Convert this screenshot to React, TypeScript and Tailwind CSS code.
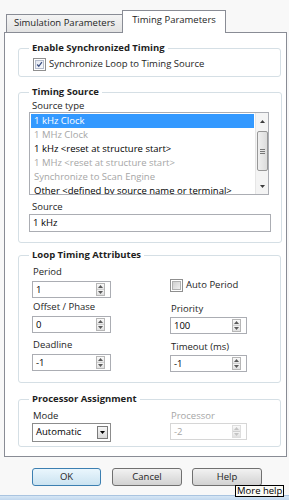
import React from 'react';

const font = { fontFamily: '"Open Sans", "Noto Sans", sans-serif' };

type Item = { text: string; selected?: boolean; disabled?: boolean };

const sourceTypes: Item[] = [
  { text: '1 kHz Clock', selected: true },
  { text: '1 MHz Clock', disabled: true },
  { text: '1 kHz <reset at structure start>' },
  { text: '1 MHz <reset at structure start>', disabled: true },
  { text: 'Synchronize to Scan Engine', disabled: true },
  { text: 'Other <defined by source name or terminal>' },
];

function Arrow({ down, color = '#4d4d4d' }: { down?: boolean; color?: string }) {
  return (
    <svg width="5" height="3" viewBox="0 0 5 3">
      <path d={down ? 'M0 0h5L2.5 3z' : 'M0 3h5L2.5 0z'} fill={color} />
    </svg>
  );
}

function Spin({
  value,
  width,
  disabled,
}: {
  value: string;
  width: string;
  disabled?: boolean;
}) {
  return (
    <div
      className={`flex h-[17px] items-center bg-white pl-[3px] pr-[5px] ${width} border ${
        disabled ? 'border-[#d6d6d6] text-[#a6a6a6]' : 'border-[#abadb3] text-black'
      }`}
    >
      <span className="flex-1 leading-none">{value}</span>
      <div
        className={`flex h-[13px] w-[9px] flex-col border ${
          disabled ? 'border-[#dedede]' : 'border-[#b6b6b6]'
        }`}
      >
        <div className="flex flex-1 items-center justify-center border-b border-[#d0d0d0] bg-linear-to-b from-[#fafafa] to-[#e6e6e6]">
          <Arrow color={disabled ? '#c4c4c4' : '#5a5a5a'} />
        </div>
        <div className="flex flex-1 items-center justify-center bg-linear-to-b from-[#f4f4f4] to-[#e0e0e0]">
          <Arrow down color={disabled ? '#c4c4c4' : '#5a5a5a'} />
        </div>
      </div>
    </div>
  );
}

function Check({ checked }: { checked?: boolean }) {
  return (
    <div className="flex h-[13px] w-[13px] items-center justify-center border border-[#8f8f8f] bg-white">
      <div
        className={`flex h-[9px] w-[9px] items-center justify-center border ${
          checked
            ? 'border-[#b5bccc] bg-linear-to-br from-[#e4e8f1] to-[#f8f9fb]'
            : 'border-[#b0b0b0] bg-linear-to-br from-[#cfcfcf] to-[#f0f0f0]'
        }`}
      >
        {checked && (
          <svg width="9" height="9" viewBox="0 0 9 9">
            <path d="M1.5 4.5 3.6 6.8 7.6 1.6" stroke="#3b4f81" strokeWidth="1.6" fill="none" />
          </svg>
        )}
      </div>
    </div>
  );
}

function Group({
  title,
  className,
  children,
}: {
  title: string;
  className: string;
  children: React.ReactNode;
}) {
  return (
    <fieldset
      className={`ml-[13px] w-[263px] rounded-[3px] border border-[#d5dfe5] px-[10px] ${className}`}
    >
      <legend className="px-[3px] text-[9.5px] font-bold leading-[14px] text-[#1e1e1e]">
        {title}
      </legend>
      {children}
    </fieldset>
  );
}

function Button({ label, primary }: { label: string; primary?: boolean }) {
  return (
    <div
      className={`flex h-[18px] items-center justify-center rounded-[3px] border ${
        primary
          ? 'w-[69px] border-[#3c7fb1] bg-linear-to-b from-[#eaf6fd] to-[#cbe3f1]'
          : 'w-[70px] border-[#707070] bg-linear-to-b from-[#f2f2f2] to-[#d2d2d2]'
      }`}
    >
      {label}
    </div>
  );
}

export default function App() {
  return (
    <div
      className="relative h-[500px] w-[289px] overflow-hidden bg-[#f8f8f8] text-[9.5px] text-[#1e1e1e]"
      style={font}
    >
      {/* tab strip */}
      <div className="mt-[10px] flex items-end pl-[6px]">
        <div className="flex h-[18px] w-[117px] items-center justify-center border border-b-0 border-[#898c95] bg-linear-to-b from-[#f4f4f4] to-[#e3e3e3]">
          Simulation Parameters
        </div>
        <div className="relative z-10 -mb-px -ml-px flex h-[23px] w-[104px] items-center justify-center border border-b-0 border-[#898c95] bg-white pb-[3px]">
          Timing Parameters
        </div>
      </div>

      {/* tab panel */}
      <div className="ml-[4px] h-[425px] w-[283px] border border-[#898c95] bg-white pt-[8px]">
        <Group title="Enable Synchronized Timing" className="pb-[5px]">
          <div className="mt-[2px] flex h-[14px] items-center pl-[4px]">
            <Check checked />
            <span className="ml-[3px]">Synchronize Loop to Timing Source</span>
          </div>
        </Group>

        <Group title="Timing Source" className="mt-[8px] pb-[10px]">
          <div className="h-[13px] pl-[3px] leading-[13px]">Source type</div>
          <div className="flex h-[83px] w-[240px] overflow-hidden border border-[#abadb3] bg-white">
            <div className="flex-1 px-[1px] pt-[1px]">
              {sourceTypes.map((it) => (
                <div
                  key={it.text}
                  className={`h-[14px] whitespace-nowrap pl-[3px] leading-[14px] ${
                    it.selected
                      ? 'bg-[#3399ff] text-white'
                      : it.disabled
                        ? 'text-[#a6a6a6]'
                        : 'text-black'
                  }`}
                >
                  {it.text}
                </div>
              ))}
            </div>
            <div className="flex w-[13px] flex-col items-center border-l border-[#e6e6e6] bg-[#f4f4f4] py-[1px]">
              <div className="flex h-[14px] items-center">
                <Arrow color="#3c3c3c" />
              </div>
              <div className="mt-[3px] flex h-[40px] w-[11px] flex-col items-center justify-center gap-[1px] rounded-[2px] border border-[#979797] bg-linear-to-r from-[#f0f0f0] to-[#dcdcdc]">
                <div className="h-px w-[5px] bg-[#777]" />
                <div className="h-px w-[5px] bg-[#777]" />
                <div className="h-px w-[5px] bg-[#777]" />
              </div>
              <div className="mt-auto flex h-[14px] items-center">
                <Arrow down color="#3c3c3c" />
              </div>
            </div>
          </div>
          <div className="mt-[5px] h-[13px] pl-[3px] leading-[13px]">Source</div>
          <div className="mt-[1px] flex h-[18px] w-[242px] items-center border border-[#abadb3] bg-white pl-[3px] text-black">
            1 kHz
          </div>
        </Group>

        <Group title="Loop Timing Attributes" className="mt-[5px] pb-[10px]">
          <div className="flex pl-[3px]">
            <div className="flex w-[138px] flex-col">
              <div className="mt-[3px] h-[13px] pl-[1px] leading-[13px]">Period</div>
              <div className="mt-[3px]">
                <Spin value="1" width="w-[79px]" />
              </div>
              <div className="mt-[2px] h-[13px] pl-[1px] leading-[13px]">Offset / Phase</div>
              <div className="mt-[3px]">
                <Spin value="0" width="w-[79px]" />
              </div>
              <div className="mt-[5px] h-[13px] pl-[1px] leading-[13px]">Deadline</div>
              <div className="mt-[3px]">
                <Spin value="-1" width="w-[79px]" />
              </div>
            </div>
            <div className="flex flex-col">
              <div className="mt-[16px] flex h-[14px] items-center">
                <Check />
                <span className="ml-[3px]">Auto Period</span>
              </div>
              <div className="mt-[10px] h-[13px] pl-[1px] leading-[13px]">Priority</div>
              <div className="mt-[2px]">
                <Spin value="100" width="w-[77px]" />
              </div>
              <div className="mt-[6px] h-[13px] pl-[1px] leading-[13px]">Timeout (ms)</div>
              <div className="mt-[2px]">
                <Spin value="-1" width="w-[77px]" />
              </div>
            </div>
          </div>
        </Group>

        <Group title="Processor Assignment" className="mt-[9px] pb-[4px]">
          <div className="flex pl-[3px]">
            <div className="flex w-[138px] flex-col">
              <div className="mt-[3px] h-[13px] pl-[1px] leading-[13px]">Mode</div>
              <div className="mt-[1px] flex h-[19px] w-[79px] items-center border border-[#8c8c8c] bg-white pl-[3px] pr-[2px] text-black">
                <span className="flex-1">Automatic</span>
                <div className="flex h-[13px] w-[11px] items-center justify-center border border-[#7a7a7a] bg-linear-to-b from-[#f6f6f6] to-[#d9d9d9]">
                  <Arrow down color="#000" />
                </div>
              </div>
            </div>
            <div className="flex flex-col">
              <div className="mt-[3px] h-[13px] pl-[1px] leading-[13px] text-[#a6a6a6]">Processor</div>
              <div className="mt-[1px]">
                <Spin value="-2" width="w-[77px]" disabled />
              </div>
            </div>
          </div>
        </Group>
      </div>

      {/* dialog buttons */}
      <div className="mt-[11px] flex gap-[12px] pl-[32px]">
        <Button label="OK" primary />
        <div className="-ml-px">
          <Button label="Cancel" />
        </div>
        <div className="-ml-[2px]">
          <Button label="Help" />
        </div>
      </div>

      <div className="mt-[9px] h-[6px] border-t border-[#a9c4e0] bg-linear-to-b from-[#d6e6f5] to-[#bcd4ec]" />

      {/* tooltip */}
      <div className="absolute left-[235px] top-[485px] z-20 flex h-[12px] items-center border border-black bg-[#fbfbf6] px-[1px] text-[9.5px] leading-none text-black">
        More help
      </div>
    </div>
  );
}
